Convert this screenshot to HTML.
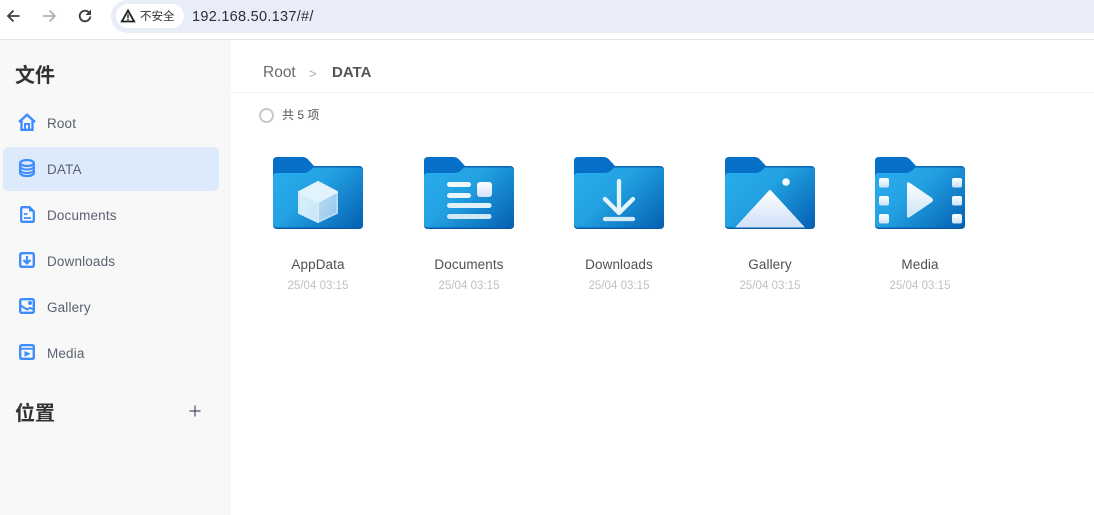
<!DOCTYPE html>
<html lang="zh"><head><meta charset="utf-8"><title>DATA</title>
<style>
html,body{margin:0;padding:0;width:1094px;height:515px;overflow:hidden;background:#fff}
body{font-family:"Liberation Sans","Noto Sans CJK SC",sans-serif;position:relative}
.t{position:absolute;white-space:nowrap;line-height:18px}
.abs{position:absolute;display:block}
.n{font-size:13.5px;color:#5a6170;left:47px;letter-spacing:.15px}
.fn{font-size:13.5px;color:#505050;width:150px;text-align:center;letter-spacing:.1px}
.fd{font-size:11.5px;color:#c0c0c0;width:150px;text-align:center;letter-spacing:.03px}
</style></head><body>
<svg width="0" height="0" style="position:absolute"><defs>
<linearGradient id="f" x1="0" y1=".25" x2="1" y2=".95"><stop offset="0" stop-color="#28aaea"/><stop offset=".35" stop-color="#23a2e3"/><stop offset="1" stop-color="#0562b4"/></linearGradient>
<linearGradient id="w" x1="0" y1="0" x2="0" y2="1"><stop offset="0" stop-color="#fff"/><stop offset="1" stop-color="#c9e3f6"/></linearGradient>
<linearGradient id="m" x1="0" y1="0" x2="0" y2="1"><stop offset="0" stop-color="#fff"/><stop offset="1" stop-color="#cfe1f9"/></linearGradient>
<linearGradient id="cl" x1="0" y1="0" x2="1" y2="1"><stop offset="0" stop-color="#dbf1fb"/><stop offset="1" stop-color="#c6e6f8"/></linearGradient>
<linearGradient id="cr" x1="0" y1="0" x2="1" y2="1"><stop offset="0" stop-color="#c0e0f5"/><stop offset="1" stop-color="#93c5ec"/></linearGradient>
<g id="folder">
<path d="M0 3Q0 -1 4 -1H29Q33 -1 35 1.500L41 8V24H0Z" fill="#0670c8"/>
<path d="M28 15Q34 15 37 12L41 8H86Q90 8 90 12V40H28Z" fill="#0a65b4"/>
<path d="M0 67Q0 71 4 71H86Q90 71 90 67V60H0Z" fill="#0b5ca6"/>
<path d="M0 18.500Q0 15 4 15H30Q34 15 37 12.500L40 9.500H86Q90 9.500 90 13V66Q90 69.500 86 69.500H4Q0 69.500 0 66Z" fill="url(#f)"/>
</g></defs></svg>

<!-- browser bar -->
<div class="abs" style="left:0;top:39px;width:1094px;height:1px;background:#e3e3e3"></div>
<div class="abs" style="left:111px;top:0;width:983px;height:33px;background:#e9edf7;border-radius:17px 0 0 17px"></div>
<div class="abs" style="left:116px;top:4px;width:68px;height:24px;background:#fff;border-radius:12px"></div>
<svg class="abs" style="left:5px;top:7px" width="18" height="18" viewBox="0 0 18 18" fill="none" stroke="#3c4043" stroke-width="1.800"><path d="M14.500 9H3M8.500 3.500 3 9 8.500 14.500"/></svg>
<svg class="abs" style="left:40px;top:7px" width="18" height="18" viewBox="0 0 18 18" fill="none" stroke="#b0b2b5" stroke-width="1.800"><path d="M3 9H14.500M9.500 3.500 15 9 9.500 14.500"/></svg>
<svg class="abs" style="left:76px;top:7px" width="18" height="18" viewBox="0 0 18 18" fill="none" stroke="#3c4043" stroke-width="1.900"><path d="M14.300 9.500A5.300 5.300 0 1 1 12.700 5.200L14 6.500"/><path d="M15 2.500V8H9.500Z" fill="#3c4043" stroke="none"/></svg>
<svg class="abs" style="left:120px;top:8px" width="16" height="16" viewBox="0 0 16 16" fill="none" stroke="#202124" stroke-width="1.800"><path d="M8 2.500 14.200 13.500H1.800Z"/><path d="M8 6.300V10M8 10.800V12.300" stroke-width="1.500"/></svg>
<div class="t" style="left:140px;top:8px;font-size:11.500px;color:#2c2e31">不安全</div>
<div class="t" style="left:192px;top:8px;font-size:14.500px;color:#2b2e36;letter-spacing:.28px">192.168.50.137/#/</div>

<!-- sidebar -->
<div class="abs" style="left:0;top:40px;width:231px;height:475px;background:#f8f8f8"></div>
<div class="t" style="left:15px;top:64px;font-size:20px;line-height:24px;font-weight:700;color:#333">文件</div>
<div class="abs" style="left:3px;top:147px;width:216px;height:44px;background:#dceafb;border-radius:5px"></div>

<svg class="abs" style="left:18px;top:113px" width="18" height="18" viewBox="0 0 18 18" fill="none" stroke="#3f8cff" stroke-width="2.400"><path d="M1 9 9 1.800 17 9M3.500 7.500V16.800H14.500V7.500"/><path d="M7 16.800V11H11V16.800" stroke-width="2"/></svg>
<svg class="abs" style="left:19px;top:159px" width="16" height="18" viewBox="0 0 16 18" fill="none" stroke="#3f8cff" stroke-width="2.300"><ellipse cx="8" cy="4" rx="6.800" ry="3"/><path d="M1.200 4V14c0 1.700 3 3 6.800 3s6.800-1.300 6.800-3V4"/><path d="M1.200 7.500c0 1.700 3 3 6.800 3s6.800-1.300 6.800-3M1.200 11c0 1.700 3 3 6.800 3s6.800-1.300 6.800-3" stroke-width="1.900"/></svg>
<svg class="abs" style="left:20px;top:206px" width="15" height="17" viewBox="0 0 15 17" fill="none" stroke="#3f8cff" stroke-width="2.300"><path d="M2.500 1.200H9.500L13.800 5.500V14.500Q13.800 15.800 12.500 15.800H2.500Q1.200 15.800 1.200 14.500V2.500Q1.200 1.200 2.500 1.200Z"/><path d="M4 8H7.500M4 12H11" stroke-width="1.800"/><path d="M9 1.500V5.500H13.500Z" fill="#3f8cff" stroke="none"/></svg>
<svg class="abs" style="left:19px;top:252px" width="16" height="16" viewBox="0 0 16 16" fill="none" stroke="#3f8cff" stroke-width="2.400"><rect x="1.200" y="1.200" width="13.600" height="13.600" rx="1.500"/><path d="M8 4V11M4.500 8 8 11.500 11.500 8" stroke-width="2.200"/></svg>
<svg class="abs" style="left:19px;top:298px" width="16" height="16" viewBox="0 0 16 16" fill="none" stroke="#3f8cff" stroke-width="2.400"><rect x="1.200" y="1.200" width="13.600" height="13.600" rx="1.500"/><path d="M1 7 8 11.500 11 10 15 11.500" stroke-width="2"/><circle cx="11" cy="5" r="2" fill="#3f8cff" stroke="none"/></svg>
<svg class="abs" style="left:19px;top:344px" width="16" height="16" viewBox="0 0 16 16" fill="none" stroke="#3f8cff" stroke-width="2.400"><rect x="1.200" y="1.200" width="13.600" height="13.600" rx="1.500"/><path d="M1 4.800H15" stroke-width="1.800"/><path d="M2.500 2.700H13.500" stroke="#cfe2ff" stroke-width="1.200" stroke-dasharray="1.300 1.300"/><path d="M5.500 7 11.800 9.800 5.500 12.800Z" fill="#3f8cff" stroke="none"/></svg>

<div class="t n" style="top:115px">Root</div>
<div class="t n" style="top:161px">DATA</div>
<div class="t n" style="top:207px">Documents</div>
<div class="t n" style="top:253px">Downloads</div>
<div class="t n" style="top:299px">Gallery</div>
<div class="t n" style="top:345px">Media</div>

<div class="t" style="left:15px;top:402px;font-size:20px;line-height:24px;font-weight:700;color:#333">位置</div>
<svg class="abs" style="left:189px;top:405px" width="12" height="12" viewBox="0 0 12 12" stroke="#4a5160" stroke-width="1.200"><path d="M6 .5V11.500M.5 6H11.500"/></svg>

<!-- breadcrumb -->
<div class="t" style="left:263px;top:64px;font-size:15.500px;color:#6a6a6a">Root</div>
<div class="t" style="left:309px;top:65px;font-size:13px;color:#aaa">&gt;</div>
<div class="t" style="left:332px;top:64px;font-size:15px;font-weight:700;color:#555">DATA</div>
<div class="abs" style="left:231px;top:92px;width:863px;height:1px;background:#f0f0f0"></div>
<div class="abs" style="left:259px;top:108px;width:11px;height:11px;border:2px solid #c8c8c8;border-radius:50%"></div>
<div class="t" style="left:282px;top:106px;font-size:12px;color:#555">共 5 项</div>

<!-- folders -->
<svg class="abs" style="left:273px;top:157px" width="90" height="73" viewBox="0 -1 90 73"><use href="#folder"/>
<path d="M45 24 64 34V55L45 64Z" fill="url(#cr)" stroke="#b5d9f2" stroke-width="2" stroke-linejoin="round"/><path d="M45 44V64L26 55V34Z" fill="url(#cl)" stroke="#d2ecfa" stroke-width="2" stroke-linejoin="round"/><path d="M45 24 64 34 45 44 26 34Z" fill="#e2f3fc" stroke="#e2f3fc" stroke-width="2" stroke-linejoin="round"/></svg>

<svg class="abs" style="left:424px;top:157px" width="90" height="73" viewBox="0 -1 90 73"><use href="#folder"/>
<rect x="23" y="24" width="24" height="5" rx="2.500" fill="#f2f9fd"/><rect x="23" y="35" width="24" height="5" rx="2.500" fill="#eaf6fc"/><rect x="23" y="45" width="44.500" height="5" rx="2.500" fill="#dff1fb"/><rect x="23" y="56" width="44.500" height="5" rx="2.500" fill="#cfe9f8"/><rect x="53" y="24" width="15" height="15" rx="3" fill="url(#m)"/></svg>

<svg class="abs" style="left:574px;top:157px" width="90" height="73" viewBox="0 -1 90 73"><use href="#folder"/>
<path d="M45 23V54M31 41 45 55 59 41" fill="none" stroke="#e6f5fc" stroke-width="4.300" stroke-linecap="round" stroke-linejoin="round"/><path d="M31 61H59" stroke="#d4ecf9" stroke-width="4.300" stroke-linecap="round"/></svg>

<svg class="abs" style="left:725px;top:157px" width="90" height="73" viewBox="0 -1 90 73"><use href="#folder"/>
<circle cx="61" cy="24" r="3.800" fill="#f5fbfe"/><path d="M44 32.500Q45 31.500 46 32.500L80 69.500H10Z" fill="url(#m)"/></svg>

<svg class="abs" style="left:875px;top:157px" width="90" height="73" viewBox="0 -1 90 73"><use href="#folder"/>
<g fill="url(#w)"><rect x="4" y="20" width="10" height="9.500" rx="2"/><rect x="4" y="38" width="10" height="9.500" rx="2"/><rect x="4" y="56" width="10" height="9.500" rx="2"/><rect x="77" y="20" width="10" height="9.500" rx="2"/><rect x="77" y="38" width="10" height="9.500" rx="2"/><rect x="77" y="56" width="10" height="9.500" rx="2"/></g>
<path d="M32 26Q32 23 35 25L57 40Q59 42 57 44L35 59Q32 61 32 58Z" fill="url(#w)"/></svg>

<div class="t fn" style="left:243px;top:256px">AppData</div><div class="t fd" style="left:243px;top:277px">25/04 03:15</div>
<div class="t fn" style="left:394px;top:256px">Documents</div><div class="t fd" style="left:394px;top:277px">25/04 03:15</div>
<div class="t fn" style="left:544px;top:256px">Downloads</div><div class="t fd" style="left:544px;top:277px">25/04 03:15</div>
<div class="t fn" style="left:695px;top:256px">Gallery</div><div class="t fd" style="left:695px;top:277px">25/04 03:15</div>
<div class="t fn" style="left:845px;top:256px">Media</div><div class="t fd" style="left:845px;top:277px">25/04 03:15</div>
</body></html>
